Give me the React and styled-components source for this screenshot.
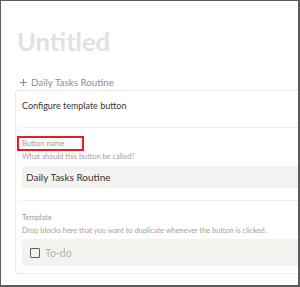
import React from 'react';
import styled, { createGlobalStyle } from 'styled-components';

const GlobalStyle = createGlobalStyle`
  html, body {
    margin: 0;
    padding: 0;
    background: #ffffff;
  }
  * {
    box-sizing: border-box;
  }
`;

const Frame = styled.div`
  width: 300px;
  height: 287px;
  border-style: solid;
  border-color: #5b5b5b;
  border-width: 1px 2px 2px 1px;
  overflow: hidden;
  background: #ffffff;
  font-family: Lato, 'Noto Sans', sans-serif;
`;

const Page = styled.div`
  padding: 24px 0 0 16px;
`;

const Title = styled.h1`
  margin: 0;
  font-size: 25.5px;
  line-height: 32px;
  font-weight: 700;
  color: #e1e1e0;
`;

const ButtonRow = styled.div`
  display: flex;
  align-items: center;
  gap: 4px;
  margin: 18px 0 1px 3px;
  height: 14px;
  font-size: 9.8px;
  color: #8f8e8b;
`;

const Card = styled.div`
  margin-left: -2px;
  width: 320px;
  border: 1px solid #ecebea;
  border-radius: 3px;
  padding: 0 0 7px 6px;
`;

const CardHeader = styled.div`
  height: 37px;
  padding-top: 9px;
  font-size: 9px;
  line-height: 12px;
  color: #37352f;
  border-bottom: 1px solid #eeeeec;
`;

const Section = styled.div`
  display: flex;
  flex-direction: column;
  align-items: stretch;
  padding-top: ${(p) => p.$top}px;
  padding-bottom: ${(p) => p.$bottom}px;
  border-bottom: ${(p) => (p.$divider ? '1px solid #eeeeec' : 'none')};
`;

const Label = styled.div`
  align-self: flex-start;
  font-size: 7.5px;
  line-height: 11px;
  color: #9b9a97;
  padding: 0 4px 0 3px;
  margin-left: -5px;
  border: 2px solid ${(p) => (p.$highlight ? '#e81c24' : 'transparent')};
  width: ${(p) => (p.$highlight ? '67px' : 'auto')};
`;

const Hint = styled.div`
  font-size: 7.4px;
  line-height: 11px;
  color: #a3a29f;
  white-space: nowrap;
`;

const NameInput = styled.div`
  margin-top: 4px;
  height: 22px;
  background: #f3f2ef;
  border-radius: 3px;
  display: flex;
  align-items: center;
  padding-left: 4px;
  font-size: 10px;
  color: #37352f;
`;

const TemplateBox = styled.div`
  margin-top: 3px;
  height: 27px;
  background: #f3f2ef;
  border-radius: 3px;
  display: flex;
  align-items: center;
  gap: 5px;
  padding-left: 8px;
  font-size: 10.5px;
  color: #b3b2af;
`;

const Checkbox = styled.span`
  width: 10px;
  height: 10px;
  border: 1.5px solid #5f5e5b;
  border-radius: 1px;
`;

export default function App() {
  return (
    <>
      <GlobalStyle />
      <Frame>
        <Page>
          <Title>Untitled</Title>
          <ButtonRow>
            <svg width="7" height="7" viewBox="0 0 7 7">
              <path d="M3.5 0v7M0 3.5h7" stroke="#8f8e8b" strokeWidth="1" fill="none" />
            </svg>
            <span>Daily Tasks Routine</span>
          </ButtonRow>
          <Card>
            <CardHeader>Configure template button</CardHeader>
            <Section $top={8} $bottom={12} $divider>
              <Label $highlight>Button name</Label>
              <Hint>What should this button be called?</Hint>
              <NameInput>Daily Tasks Routine</NameInput>
            </Section>
            <Section $top={9} $bottom={0}>
              <Label>Template</Label>
              <Hint>Drop blocks here that you want to duplicate whenever the button is clicked.</Hint>
              <TemplateBox>
                <Checkbox />
                <span>To-do</span>
              </TemplateBox>
            </Section>
          </Card>
        </Page>
      </Frame>
    </>
  );
}
